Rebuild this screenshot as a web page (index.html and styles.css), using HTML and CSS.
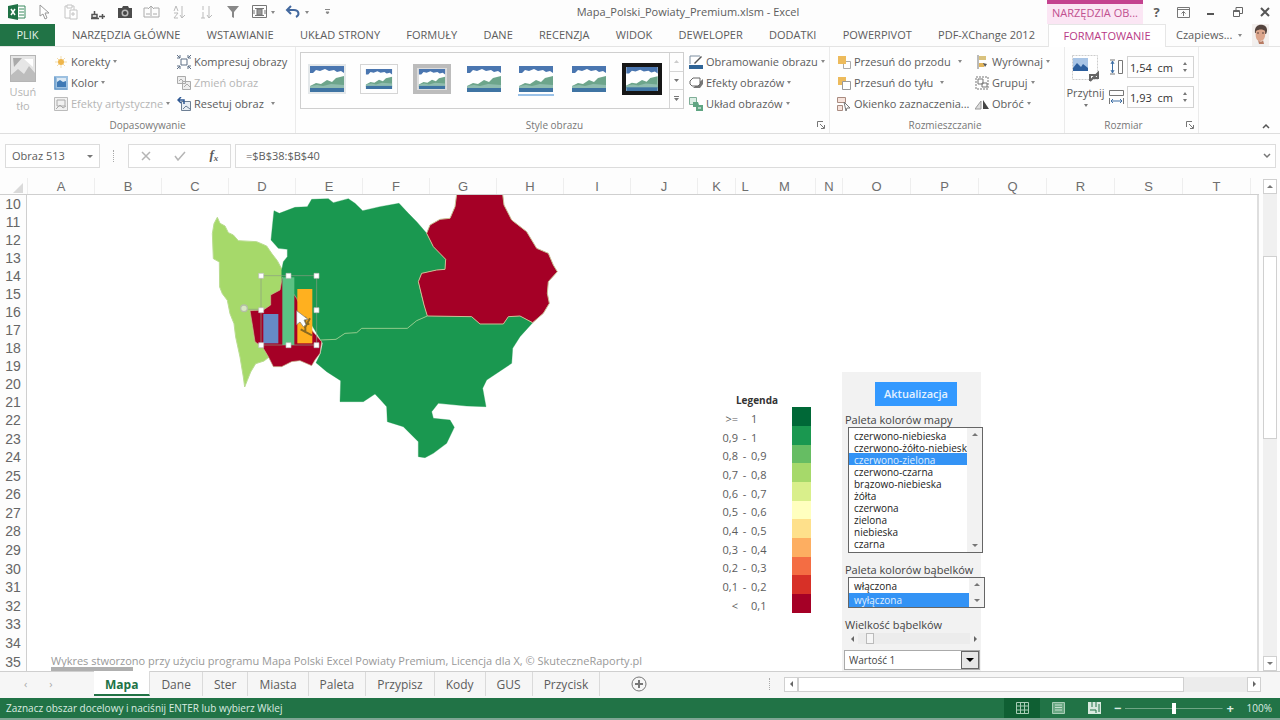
FILE: index.html
```html
<!DOCTYPE html>
<html lang="pl">
<head>
<meta charset="utf-8">
<title>Mapa_Polski_Powiaty_Premium.xlsm - Excel</title>
<link rel="stylesheet" href="styles.css">
</head>
<body>
<svg class="defs" aria-hidden="true">
  <defs>
    <symbol id="pic" viewBox="0 0 34 26">
      <rect width="34" height="26" fill="#fff"/>
      <path d="M0 0h34v7l-3-2-4 1-3-2-5 1-4-2-5 2-4-1-3 3H0z" fill="#4a76b0"/>
      <path d="M0 20l6-3 5 1 6-4 5 2 4-4 8-2v13H0z" fill="#6da58b"/>
      <path d="M0 20l7-1 6 1 8-2 13 1v4H0z" fill="#8fbcae"/>
      <rect y="22" width="34" height="4" fill="#3f74a3"/>
    </symbol>
    <symbol id="launch" viewBox="0 0 8 8"><path d="M.5 6V.5H6M3 3l4 4M7.500 4v3.500H4" fill="none" stroke="#777"/></symbol>
  </defs>
</svg>
<div class="app">
  <header class="titlebar">
    <div class="qat">
      <button aria-label="Excel"><svg width="18" height="16" viewBox="0 0 18 16"><path d="M9 2h8v12H9" fill="#fff" stroke="#3b8a5f"/><path d="M11 5h5M11 8h5M11 11h5" stroke="#3b8a5f"/><path d="M0 2l10-2v16L0 14z" fill="#1f7145"/><path d="M3 5l4 6M7 5l-4 6" stroke="#fff" stroke-width="1.500"/></svg></button>
      <button aria-label="Wskaźnik"><svg width="12" height="16" viewBox="0 0 12 16"><path d="M2 1v11l3-2 2 5 2-1-2-5h4z" fill="#fff" stroke="#999"/></svg></button>
      <button aria-label="Wklej"><svg width="16" height="16" viewBox="0 0 16 16" fill="#fff" stroke="#c4c4c4"><path d="M2 2h9v12H2z"/><path d="M4 1h5v3H4zM7 6h7v9H7z"/><path d="M10 8v4M8 10h4"/></svg></button>
      <button aria-label="Kształty"><svg width="16" height="16" viewBox="0 0 16 16" fill="none" stroke="#555"><path d="M1 14.500h8M2 10.500h5v3H2zM4.500 7v3M9 12.500h6M12.500 10v5" stroke-width="1.500"/></svg></button>
      <button aria-label="Aparat"><svg width="16" height="14" viewBox="0 0 16 14"><path d="M1 3h4l1-2h5l1 2h3v10H1z" fill="#4c4c4c"/><circle cx="8" cy="8" r="3.500" fill="#bbb"/><circle cx="8" cy="8" r="2" fill="#444"/></svg></button>
      <button aria-label="Wyślij"><svg width="17" height="16" viewBox="0 0 17 16" fill="none" stroke="#aaa"><path d="M1 4h4M11 4h5v9H1V4M8 12V2M5 5l3-3 3 3M3 10h4M10 10h4"/></svg></button>
      <button aria-label="Sortuj rosnąco"><svg width="14" height="16" viewBox="0 0 14 16" fill="none" stroke="#bbb"><path d="M2 7l2-5 2 5M2 9h4l-4 5h4M10 2v12M8 11l2 3 3-3"/></svg></button>
      <button aria-label="Sortuj malejąco"><svg width="14" height="16" viewBox="0 0 14 16" fill="none" stroke="#bbb"><path d="M4 2v4M4 8v6M2 14h4M10 2v12M8 11l2 3 3-3"/></svg></button>
      <button aria-label="Filtr"><svg width="14" height="14" viewBox="0 0 14 14"><path d="M1 1h12L8 7v6l-2-1V7z" fill="#888"/></svg></button>
      <button aria-label="Makro" class="drop"><svg width="15" height="15" viewBox="0 0 15 15" fill="none" stroke="#777"><path d="M.5.5h14v12H.5z"/><path d="M3 3.500h9M3 10.500h9"/><path d="M5 4h5v6H5z" fill="#999"/><path d="M2 5v4M13 5v4"/></svg></button>
      <button aria-label="Cofnij" class="drop"><svg width="16" height="14" viewBox="0 0 16 14" fill="none" stroke="#44699f" stroke-width="2"><path d="M6 1L2 5l4 4M2 5h7c5 0 6 5 2 7"/></svg></button>
      <button aria-label="Dostosuj"><svg width="8" height="8" viewBox="0 0 8 8"><path d="M1 1.500h5M2 4h3l-1.500 2z" stroke="#888" fill="#888"/></svg></button>
    </div>
    <h1 class="title">Mapa_Polski_Powiaty_Premium.xlsm - Excel</h1>
    <div class="context">NARZĘDZIA OB...</div>
    <div class="winctl">
      <button class="help" aria-label="Pomoc">?</button>
      <button aria-label="Opcje wstążki"><svg width="13" height="11" viewBox="0 0 13 11" fill="none" stroke="#777"><path d="M.5.5h12v10H.5zM.5 2.500h12M6.500 9V4.500M4.500 6.500l2-2 2 2"/></svg></button>
      <button aria-label="Minimalizuj"><svg width="9" height="9" viewBox="0 0 9 9"><path d="M1 6h7" stroke="#555" stroke-width="2"/></svg></button>
      <button aria-label="Przywróć"><svg width="10" height="10" viewBox="0 0 10 10" fill="none" stroke="#666"><path d="M.5 3.500h6v6h-6zM3 3V.5h6.500v6H7M.5 4.500h6"/></svg></button>
      <button aria-label="Zamknij"><svg width="10" height="10" viewBox="0 0 10 10"><path d="M1 1l8 8M9 1L1 9" stroke="#555" stroke-width="2"/></svg></button>
    </div>
  </header>

  <nav class="tabs">
    <button class="file">PLIK</button>
    <div class="tablist">
      <button>NARZĘDZIA GŁÓWNE</button><button>WSTAWIANIE</button><button>UKŁAD STRONY</button><button>FORMUŁY</button><button>DANE</button><button>RECENZJA</button><button>WIDOK</button><button>DEWELOPER</button><button>DODATKI</button><button>POWERPIVOT</button><button>PDF-XChange 2012</button>
    </div>
    <button class="active">FORMATOWANIE</button>
    <button class="user drop">Czapiews...</button>
    <svg class="avatar" width="17" height="22" viewBox="0 0 17 22"><rect width="17" height="22" fill="#f3efed"/><path d="M3 9C2 2 7 0 11 1c4 1 5 5 3 9z" fill="#54443e"/><path d="M4 7c3-2 7-2 9 0 1 6-1 10-5 10S3 12 4 7z" fill="#dca58b"/><path d="M2 22c1-5 4-5 6-4 4-1 6 1 7 4z" fill="#efefef"/><path d="M5 9h2M10 9h2" stroke="#5a4038"/><path d="M6 16c2 2 4 2 5 0l1 4H7z" fill="#b87b63"/></svg>
  </nav>

  <section class="ribbon">
    <div class="group g-adjust">
      <div class="body">
        <button class="big off"><svg width="26" height="27" viewBox="0 0 26 27"><rect x=".5" y=".5" width="25" height="26" fill="#e6e6e6" stroke="#b5b5b5"/><path d="M3 3h9L4 12z" fill="#aaa"/><path d="M1 20l7-6 6 5 5-8 6 7v8H1z" fill="#bdbdbd"/><path d="M14 4h9v8" fill="#fff"/></svg><span>Usuń<br>tło</span></button>
        <div class="col first">
          <button class="drop"><svg class="ic" viewBox="0 0 14 14"><path d="M7 1v12M1 7h12M3 3l8 8M11 3l-8 8" stroke="#f1dcae"/><circle cx="7" cy="7" r="3" fill="#efb64b"/></svg>Korekty</button>
          <button class="drop"><svg class="ic" viewBox="0 0 14 14"><rect width="14" height="14" fill="#9cc0e0"/><rect x="3" y="2" width="9" height="9" fill="#3f79b5"/><path d="M3 6l3-2 3 2 3-1V2H3z" fill="#dce9f4"/><path d="M1 1v12h12" fill="none" stroke="#5a8fc2"/></svg>Kolor</button>
          <button class="drop off"><svg class="ic" viewBox="0 0 14 14"><path d="M.5.5h13v13H.5z" fill="#f1f1f1" stroke="#bbb"/><path d="M3 3h8v6H3zM2 12l4-4 3 3 3-2" fill="none" stroke="#aaa"/></svg>Efekty artystyczne</button>
        </div>
        <div class="col second">
          <button><svg class="ic" viewBox="0 0 14 14" fill="none" stroke="#5d6e85"><path d="M4 4h6v6H4zM0 0l3 3M14 0l-3 3M0 14l3-3M14 14l-3-3M0 3h3V0M14 3h-3V0M0 11h3v3M14 11h-3v3"/></svg>Kompresuj obrazy</button>
          <button class="off"><svg class="ic" viewBox="0 0 14 14" fill="#eee" stroke="#aaa"><path d="M.5.5h8v7h-8zM5.500 5.500h8v8h-8z"/><path d="M7 11l3-3 3 3M2 5l2-2 2 2" fill="none"/></svg>Zmień obraz</button>
          <button class="drop far"><svg class="ic" viewBox="0 0 14 14"><path d="M4.500 4.500h9v9h-9z" fill="#e8eef4" stroke="#6d7f94"/><path d="M6 12l3-3 4 3" stroke="#6d7f94" fill="none"/><path d="M4 0L1 3l3 3M1 3h6v4" fill="none" stroke="#305a94" stroke-width="1.500"/></svg>Resetuj obraz</button>
        </div>
      </div>
      <div class="foot"><span>Dopasowywanie</span></div>
    </div>

    <div class="group g-styles">
      <div class="body">
        <div class="gallery">
          <div class="thumbs">
            <button class="t1" aria-label="Prosta ramka"><svg><use href="#pic"/></svg></button>
            <button class="t2" aria-label="Biała ramka"><svg><use href="#pic"/></svg></button>
            <button class="t3" aria-label="Metalowa ramka"><svg><use href="#pic"/></svg></button>
            <button class="t4" aria-label="Cień"><svg><use href="#pic"/></svg></button>
            <button class="t5" aria-label="Odbicie"><svg><use href="#pic"/></svg></button>
            <button class="t6" aria-label="Miękkie krawędzie"><svg><use href="#pic"/></svg></button>
            <button class="t7" aria-label="Czarna ramka"><svg><use href="#pic"/></svg></button>
          </div>
          <div class="steps">
            <button aria-label="W górę"><svg width="5" height="4" viewBox="0 0 5 4"><path d="M0 3l2.500-3L5 3z" fill="#ccc"/></svg></button>
            <button aria-label="W dół"><svg width="5" height="4" viewBox="0 0 5 4"><path d="M0 0h5L2.500 3z" fill="#777"/></svg></button>
            <button aria-label="Więcej"><svg width="5" height="6" viewBox="0 0 5 6"><path d="M0 0h5v1H0zM0 2h5L2.500 5z" fill="#777"/></svg></button>
          </div>
        </div>
        <div class="col third">
          <button class="drop"><svg class="ic" viewBox="0 0 14 14"><path d="M1 9V1h10" fill="none" stroke="#7d8ea0"/><path d="M5 8l7-7 1 1-7 7z" fill="#555"/><rect y="10" width="14" height="4" fill="#2f6496"/></svg>Obramowanie obrazu</button>
          <button class="drop"><svg class="ic" viewBox="0 0 14 14"><path d="M4 12h7l3-4V3z" fill="#777"/><path d="M4 2h7v6l-2 2H3L1 8V5z" fill="#fff" stroke="#666"/></svg>Efekty obrazów</button>
          <button class="drop"><svg class="ic" viewBox="0 0 14 14"><path d="M.5.5h7v7h-7z" fill="#dbeee4" stroke="#7fae97"/><path d="M4 5h5l1 3h4v6H7v-4H4z" fill="#5fa582"/><path d="M9 11h3" stroke="#fff"/></svg>Układ obrazów</button>
        </div>
      </div>
      <div class="foot"><span>Style obrazu</span><button aria-label="Formatuj kształt"><svg width="8" height="8"><use href="#launch"/></svg></button></div>
    </div>

    <div class="group g-arrange">
      <div class="body">
        <div class="col fourth">
          <button class="drop far"><svg class="ic" viewBox="0 0 14 14"><path d="M6.500 6.500h7v7h-7z" fill="#fff" stroke="#aaa"/><rect x="1" y="1" width="8" height="8" fill="#edbb5c"/></svg>Przesuń do przodu</button>
          <button class="drop far"><svg class="ic" viewBox="0 0 14 14"><rect x="1" y="1" width="8" height="8" fill="#edbb5c"/><path d="M5.500 5.500h8v8h-8z" fill="#fff" stroke="#999"/></svg>Przesuń do tyłu</button>
          <button><svg class="ic" viewBox="0 0 14 14"><path d="M.5.5h8v5h-8zM.5 8.500h5v5h-5z" fill="#f6e3dc" stroke="#a98b80"/><path d="M7 5l6 6h-3l-1 3z" fill="#fff" stroke="#777"/></svg>Okienko zaznaczenia...</button>
        </div>
        <div class="col fifth">
          <button class="drop"><svg class="ic" viewBox="0 0 14 14"><path d="M3 0v14" stroke="#777"/><rect x="4" y="1" width="7" height="4" fill="#d9c27e"/><rect x="4" y="8" width="5" height="4" fill="#e2b65c"/><path d="M8 8l4 1-2 3z" fill="#555"/></svg>Wyrównaj</button>
          <button class="drop"><svg class="ic" viewBox="0 0 14 14" fill="none" stroke="#777"><path d="M1 1h12v12H1z" stroke-dasharray="2 1"/><path d="M3 3h5v5H3zM7 7h5v4H7z"/></svg>Grupuj</button>
          <button class="drop"><svg class="ic" viewBox="0 0 14 14"><path d="M0 12h6V4z" fill="#ddd" stroke="#999"/><path d="M8 3v9h6z" fill="#444"/></svg>Obróć</button>
        </div>
      </div>
      <div class="foot"><span>Rozmieszczanie</span></div>
    </div>

    <div class="group g-size">
      <div class="body">
        <button class="big crop"><svg width="27" height="27" viewBox="0 0 27 27"><path d="M.5.5h25v24H.5z" fill="#fff" stroke="#ccc" stroke-dasharray="2 1"/><rect x="1" y="3" width="15" height="13" fill="#a9c5e6"/><path d="M1 13l4-5 4 4 2-3 5 4v3H1z" fill="#2d5f9e"/><path d="M18 26v-6h7M20 23h6v-5l-8 8" fill="none" stroke="#666" stroke-width="2"/></svg><span>Przytnij</span><i></i></button>
        <div class="dims">
          <label><svg width="15" height="16" viewBox="0 0 15 16" fill="none" stroke="#777"><path d="M1 1h5M1 15h5"/><path d="M3.500 2v12M2 5l1.500-3L5 5M2 11l1.500 3L5 11" stroke="#3d6ea5"/><path d="M9.500 1.500h4v13h-4z"/></svg><input aria-label="Wysokość" value="1,54  cm"><span class="spin"></span></label>
          <label><svg width="15" height="16" viewBox="0 0 15 16" fill="none" stroke="#777"><path d="M.5 1.500h14v5H.5zM.5 9v6M14.500 9v6"/><path d="M2 12h11M4 10l-2 2 2 2M11 10l2 2-2 2" stroke="#3d6ea5"/></svg><input aria-label="Szerokość" value="1,93  cm"><span class="spin"></span></label>
        </div>
      </div>
      <div class="foot"><span>Rozmiar</span><button aria-label="Rozmiar i właściwości"><svg width="8" height="8"><use href="#launch"/></svg></button></div>
    </div>
    <button class="collapse" aria-label="Zwiń wstążkę"><svg width="8" height="6" viewBox="0 0 8 6"><path d="M1 5l3-3 3 3" fill="none" stroke="#555" stroke-width="1.500"/></svg></button>
  </section>

  <section class="formula">
    <div class="namebox"><input aria-label="Pole nazwy" value="Obraz 513"><i></i></div>
    <span class="grip"></span>
    <div class="fx">
      <button aria-label="Anuluj"><svg width="10" height="10" viewBox="0 0 10 10"><path d="M1 1l8 8M9 1L1 9" stroke="#b5b5b5" stroke-width="1.500"/></svg></button>
      <button aria-label="Wpis"><svg width="12" height="10" viewBox="0 0 12 10"><path d="M1 5l3 4 7-8" fill="none" stroke="#b5b5b5" stroke-width="1.500"/></svg></button>
      <button class="fn" aria-label="Wstaw funkcję">f<sub>x</sub></button>
    </div>
    <div class="entry"><input aria-label="Pasek formuły" value="=$B$38:$B$40"><svg width="8" height="6" viewBox="0 0 8 6"><path d="M1 1l3 3 3-3" fill="none" stroke="#777" stroke-width="1.500"/></svg></div>
  </section>

  <main class="work">
    <div class="grid">
      <div class="heads">
        <span class="corner"><svg width="10" height="10" viewBox="0 0 10 10"><path d="M10 0v10H0z" fill="#dadada"/></svg></span>
        <span>A</span><span>B</span><span>C</span><span>D</span><span>E</span><span>F</span><span>G</span><span>H</span><span>I</span><span>J</span><span class="k">K</span><span class="l">L</span><span class="m">M</span><span class="n">N</span><span class="w">O</span><span class="w">P</span><span class="w">Q</span><span class="w">R</span><span class="w">S</span><span class="w">T</span>
      </div>
      <div class="rows">
        <span>10</span><span>11</span><span>12</span><span>13</span><span>14</span><span>15</span><span>16</span><span>17</span><span>18</span><span>19</span><span>20</span><span>21</span><span class="tall">22</span><span class="tall">23</span><span class="tall">24</span><span class="tall">25</span><span class="tall">26</span><span class="tall">27</span><span class="tall">28</span><span class="tall">29</span><span class="tall">30</span><span class="tall">31</span><span class="tall">32</span><span class="tall">33</span><span class="tall">34</span><span class="tall">35</span>
      </div>
      <div class="canvas">
        <svg class="map" viewBox="30 15 1050 801" role="img" aria-label="Mapa powiatów">
          <g stroke="#c9bf94" stroke-width="3" stroke-linejoin="round">
            <path fill="#a6d96a" stroke="#b9dc90" d="M52 82l8 18 15 8 10 20 15 7 15 17 55 3 30 13 15 22 17 22 15 28v62l-25 10-8 34-22 15-40 2 8 48 7 45 25 20 15 25-15 12-25 8-15 25-10 25-8 20-4-30-10-60-13-60-5-40-12-30-8-40-15-20-8-20-1-75-18-10-3-75 5-30z"/>
            <path fill="#1a9850" stroke="#1a9850" stroke-width="1" d="M222 62l16 8 47-18 37-2 13-22 50-2 15 12 45-12 20 14 23 22 52-12 57-10 28 30 25 25 30 35 20 40 20 20 17 18-2 30-25 2-45 10-10 25 10 45 7 25 10 33-32 14-28 23H485l-15 13-35 2-27 18-46 2-30-50-72-90-15-30V240l5-25 12-15v-22l-27-3-22-25 5-50z"/>
            <path fill="#1a9850" stroke="#1a9850" stroke-width="1" d="M362 450l46-2 27-18 35-2 15-13h137l28-23 32-14 133 2 25 22h70l15-22 35-2 38 20-38 42-22 35-3 45-75 50-12 25 10 55-58-2-85-8-20 25 5 20 50 5 13 22-23 48-40 30-25 13-20-3v-45l-45-45-48-15-2-45-18-20-17-18-35 23h-70l2-63-42-27-32-27 14-28 6-30z"/>
            <path fill="#a50026" d="M770 12h138l4 33 23 45 45 35 30 50 35 15 15 35 12 20-27 30-3 35 6 30-18 30-32 28-38-20-35 2-15 22h-70l-25-22-133-2-10-33-17-70 10-25 45-10 25-2 2-30-37-38-20-40 10-25 30-17 30-3 15-35z"/>
            <path fill="#a50026" stroke-width="2" d="M150 362l40-2 22-15v-30l28-15 7-38 43 63 45 95 30 35-5 35-15 20-10 17-35-15-25 3-30 15h-25l-15-30-15-25-25-20-7-45z"/>
            <path fill="none" d="M362 450l46-2 27-18 35-2 15-13h137l28-23 32-14" stroke="#8fca8a"/>
          </g>
          <rect x="190" y="372" width="45" height="88" fill="#668ac6"/>
          <rect x="247" y="262" width="36" height="203" fill="#5bc283"/>
          <rect x="292" y="297" width="45" height="163" fill="#ffb01f"/>
          <path d="M183 257h167v208H183zM145 358h38" fill="none" stroke="#8d9d84" stroke-width="2"/>
          <circle cx="132" cy="355" r="10" fill="#d8e8c4" stroke="#b4bfa6" stroke-width="4"/>
          <g fill="#fff" stroke="#bbb" stroke-width="2"><path d="M176 250h15v15h-15zM258 250h15v15h-15zM342 250h15v15h-15zM176 353h15v15h-15zM342 353h15v15h-15zM176 458h15v15h-15zM258 458h15v15h-15zM342 458h15v15h-15z"/></g>
          <path d="M306 402h22M316 380v48M302 418l34 18M330 385l-16 30" stroke="#8a6a20" stroke-width="6"/>
          <path d="M290 362v42l10-8 10 14 8-6-6-14 12-2z" fill="#fff" stroke="#777" stroke-width="2"/>
        </svg>
        <table class="legend">
          <caption>Legenda</caption>
          <tr><td>&gt;=</td><td></td><td>1</td><td class="c1"></td></tr>
          <tr><td>0,9</td><td>-</td><td>1</td><td class="c2"></td></tr>
          <tr><td>0,8</td><td>-</td><td>0,9</td><td class="c3"></td></tr>
          <tr><td>0,7</td><td>-</td><td>0,8</td><td class="c4"></td></tr>
          <tr><td>0,6</td><td>-</td><td>0,7</td><td class="c5"></td></tr>
          <tr><td>0,5</td><td>-</td><td>0,6</td><td class="c6"></td></tr>
          <tr><td>0,4</td><td>-</td><td>0,5</td><td class="c7"></td></tr>
          <tr><td>0,3</td><td>-</td><td>0,4</td><td class="c8"></td></tr>
          <tr><td>0,2</td><td>-</td><td>0,3</td><td class="c9"></td></tr>
          <tr><td>0,1</td><td>-</td><td>0,2</td><td class="c10"></td></tr>
          <tr><td>&lt;</td><td></td><td>0,1</td><td class="c11"></td></tr>
        </table>
        <form class="panel">
          <button type="button" class="update">Aktualizacja</button>
          <label for="map-palette">Paleta kolorów mapy</label>
          <div class="listbox">
            <select id="map-palette" size="10"><option>czerwono-niebieska</option><option>czerwono-żółto-niebieska</option><option selected>czerwono-zielona</option><option>czerwono-czarna</option><option>brązowo-niebieska</option><option>żółta</option><option>czerwona</option><option>zielona</option><option>niebieska</option><option>czarna</option></select>
            <span class="bar"><i class="up"></i><i class="down"></i></span>
          </div>
          <label for="bubble-palette" class="next">Paleta kolorów bąbelków</label>
          <div class="listbox short">
            <select id="bubble-palette" size="2"><option>włączona</option><option selected>wyłączona</option></select>
            <span class="bar"><i class="up"></i><i class="down"></i></span>
          </div>
          <label for="bubble-size" class="next">Wielkość bąbelków</label>
          <div class="slide"><i class="left"></i><input id="bubble-size" type="range" min="0" max="100" value="8"><i class="right"></i></div>
          <div class="combo"><select aria-label="Wartość"><option>Wartość 1</option></select><span><i class="down"></i></span></div>
        </form>
        <p class="note">Wykres stworzono przy użyciu programu Mapa Polski Excel Powiaty Premium, Licencja dla X, © SkuteczneRaporty.pl</p>
      </div>
    </div>
    <div class="vscroll">
      <button aria-label="Przewiń w górę"><i class="up"></i></button>
      <div class="track"><span class="thumb"></span></div>
      <button aria-label="Przewiń w dół"><i class="down"></i></button>
    </div>
  </main>

  <nav class="sheets">
    <div class="nav"><button aria-label="Poprzedni arkusz">‹</button><button aria-label="Następny arkusz">›</button></div>
    <button class="on">Mapa</button><button>Dane</button><button>Ster</button><button>Miasta</button><button>Paleta</button><button>Przypisz</button><button>Kody</button><button>GUS</button><button>Przycisk</button>
    <button class="add" aria-label="Nowy arkusz"><svg width="16" height="16" viewBox="0 0 16 16" fill="none" stroke="#777"><circle cx="8" cy="8" r="7"/><path d="M8 4v8M4 8h8" stroke-width="2"/></svg></button>
    <div class="hscroll">
      <span class="grip"></span>
      <button aria-label="Przewiń w lewo"><i class="left"></i></button>
      <div class="track"><span class="thumb"></span></div>
      <button aria-label="Przewiń w prawo"><i class="right"></i></button>
    </div>
  </nav>

  <footer class="status">
    <span class="msg">Zaznacz obszar docelowy i naciśnij ENTER lub wybierz Wklej</span>
    <div class="views">
      <button class="sel" aria-label="Normalny"><svg width="13" height="12" viewBox="0 0 13 12" fill="none" stroke="#a8cdb6"><path d="M.5.5h12v11H.5zM.5 4h12M.5 8h12M4.500 0v12M8.500 0v12"/></svg></button>
      <button aria-label="Układ strony"><svg width="13" height="12" viewBox="0 0 13 12"><path d="M.5.5h12v11H.5z" fill="#6aa783" stroke="#a8cdb6"/><path d="M3 3h7M3 5.500h7M3 8h7" stroke="#c5dfcf"/></svg></button>
      <button aria-label="Podział stron"><svg width="13" height="12" viewBox="0 0 13 12"><path d="M0 0h13v12H0z" fill="#d9eadf"/><path d="M4 0v5M8 0v5M2 8h6v3M11 2v8" stroke="#217346" fill="none"/></svg></button>
    </div>
    <div class="zoom"><button aria-label="Pomniejsz">−</button><input type="range" min="0" max="100" value="50" aria-label="Powiększenie"><button aria-label="Powiększ">+</button></div>
    <span class="pct">100%</span>
  </footer>
</div>
</body>
</html>
```

FILE: styles.css
```css
* { box-sizing: border-box; }
body { margin: 0; font: 11px/14px "Open Sans", "Noto Sans", sans-serif; color: #5c5c5c; background: #fdfdfd; }
button, input, select { font: inherit; color: inherit; background: none; border: 0; padding: 0; margin: 0; outline: 0; border-radius: 0; min-width: 0; }
button { white-space: nowrap; }
svg { display: block; flex: none; }
.defs { position: absolute; width: 0; height: 0; }
.app { display: flex; flex-direction: column; height: 100vh; min-height: 720px; overflow: hidden; }

.drop::after { content: ""; border: 2px solid transparent; border-top: 3px solid #888; border-bottom: 0; margin-left: 4px; flex: none; }
.up, .down, .left, .right { display: block; width: 0; height: 0; border: 3px solid transparent; }
.up { border-bottom-color: #777; border-top: 0; }
.down { border-top-color: #777; border-bottom: 0; }
.left { border-right-color: #666; border-left: 0; }
.right { border-left-color: #666; border-right: 0; }

.titlebar { display: flex; align-items: center; height: 24px; flex: none; }
.qat { display: flex; align-items: center; height: 22px; padding-left: 3px; }
.qat button { display: flex; align-items: center; justify-content: center; width: 27px; }
.qat .drop { width: 34px; }
.title { flex: 1; margin: 0; padding-right: 12px; font-size: 11px; font-weight: 400; text-align: center; }
.context { align-self: stretch; width: 96px; padding-top: 2px; border-top: 4px solid #c4428f; background: #fbe6f4; color: #c0508f; text-align: center; line-height: 13px; }
.winctl { display: flex; align-items: center; height: 22px; padding-right: 2px; }
.winctl button { display: flex; align-items: center; justify-content: center; width: 27px; }
.winctl .help { font-size: 13px; font-weight: 700; }

.tabs { display: flex; align-items: stretch; height: 23px; flex: none; border-bottom: 1px solid #e4e4e4; }
.tabs .file { width: 55px; background: #217346; color: #e3f1e8; }
.tablist { display: flex; flex: 1; justify-content: space-between; padding-left: 4px; }
.tablist button { padding: 0 13px; }
.tabs .active { width: 118px; margin-bottom: -1px; color: #b83a86; background: #fff; border: 1px solid #e6e6e6; border-bottom: 0; }
.tabs .user { display: flex; align-items: center; width: 86px; padding-left: 10px; }
.tabs .user::after { margin-left: 6px; }
.avatar { margin-right: 11px; }

.ribbon { display: flex; height: 87px; flex: none; background: #fefefe; border-bottom: 1px solid #dedede; }
.group { display: flex; flex-direction: column; border-right: 1px solid #ebebeb; }
.body { display: flex; flex: 1; padding-top: 4px; }
.foot { display: flex; align-items: center; height: 16px; }
.foot span { flex: 1; text-align: center; font-size: 10px; color: #777; }
.foot button { width: 16px; padding-left: 4px; }
.g-adjust { width: 296px; }
.g-styles { width: 534px; }
.g-arrange { width: 235px; }
.g-arrange .foot { padding-right: 4px; }
.g-size { width: 134px; }
.col { display: flex; flex-direction: column; }
.col button { display: flex; align-items: center; height: 21px; gap: 3px; text-align: left; }
.col .drop::after { margin-left: 0; }
.col .far::after { margin-left: 4px; }
.ic { width: 14px; height: 14px; }
.off { color: #b5b5b5; }
.big { display: flex; flex-direction: column; align-items: center; gap: 3px; padding-top: 4px; width: 46px; }
.big i { border: 2px solid transparent; border-top: 3px solid #777; border-bottom: 0; }
.first { width: 123px; padding-left: 8px; }
.second { padding-left: 8px; }
.third { padding-left: 5px; }
.fourth { width: 137px; padding-left: 7px; }
.fifth { padding-left: 8px; }
.gallery { display: flex; width: 384px; height: 57px; margin: 1px 0 0 4px; border: 1px solid #cfcfcf; }
.thumbs { display: flex; flex: 1; align-items: center; justify-content: space-around; padding-bottom: 3px; }
.thumbs svg { width: 34px; height: 26px; }
.thumbs button { border: 2px solid transparent; }
.thumbs .t1 { border-color: #e4e8ea; }
.thumbs .t2 { border: 1px solid #d5d5d5; padding: 4px; }
.thumbs .t2 svg, .thumbs .t3 svg { width: 28px; height: 20px; }
.thumbs .t3 { border: 4px solid #bcbcbc; padding: 1px; background: #ddd; }
.thumbs .t5 { box-shadow: 0 3px 0 -1px #9bc2e8; }
.thumbs .t7 { border: 4px solid #161616; }
.thumbs .t7 svg { width: 32px; height: 24px; }
.steps { display: flex; flex-direction: column; width: 14px; border-left: 1px solid #d5d5d5; }
.steps button { flex: 1; display: flex; align-items: center; justify-content: center; }
.steps button + button { border-top: 1px solid #d5d5d5; }
.crop { width: 41px; gap: 4px; }
.dims { display: flex; flex-direction: column; gap: 8px; padding: 5px 0 0 3px; }
.dims label { display: flex; align-items: center; gap: 3px; }
.dims input { width: 50px; height: 22px; padding-left: 2px; border: 1px solid #d3d3d3; border-right: 0; color: #333; white-space: pre; }
.spin { width: 17px; height: 22px; margin-left: -3px; border: 1px solid #d3d3d3; border-left: 0; display: flex; flex-direction: column; align-items: center; justify-content: space-around; padding: 3px 0; }
.spin::before, .spin::after { content: ""; border: 2px solid transparent; }
.spin::before { border-bottom: 3px solid #777; border-top: 0; }
.spin::after { border-top: 3px solid #777; border-bottom: 0; }
.collapse { margin: auto 10px 4px auto; }

.formula { display: flex; align-items: center; height: 44px; padding: 0 4px 0 5px; flex: none; }
.namebox { display: flex; align-items: center; width: 95px; height: 24px; border: 1px solid #dcdcdc; background: #fff; }
.namebox input { flex: 1; padding-left: 6px; }
.namebox i { border: 3px solid transparent; border-top-color: #777; border-bottom: 0; margin-right: 6px; }
.grip { width: 1px; height: 12px; border-left: 1px dotted #aaa; }
.formula .grip { margin: 0 14px 0 13px; }
.fx { display: flex; align-items: center; justify-content: space-around; width: 103px; height: 24px; border: 1px solid #dcdcdc; background: #fff; }
.fx .fn { font: italic 700 13px/14px "Liberation Serif", serif; }
.fn sub { font-size: 9px; vertical-align: -2px; }
.entry { display: flex; align-items: center; flex: 1; height: 24px; margin-left: 4px; padding-right: 4px; border: 1px solid #dcdcdc; background: #fff; }
.entry input { flex: 1; padding-left: 10px; }

.work { display: flex; flex: 1; min-height: 0; }
.grid { display: grid; flex: 1; min-width: 0; grid-template: 17px 1fr / 27px 1fr; }
.heads { grid-column: 1 / 3; display: flex; border-bottom: 1px solid #cfcfcf; font: 13px/17px "Liberation Sans", sans-serif; color: #6e6e6e; overflow: hidden; }
.heads span { width: 67px; flex: none; text-align: center; border-right: 1px solid #eee; }
.heads .corner { width: 28px; padding: 5px 0 0 13px; }
.heads .k { width: 38px; }
.heads .l { width: 18px; border: 0; }
.heads .m { width: 62px; }
.heads .n { width: 27px; }
.heads .w { width: 68px; }
.rows { display: flex; flex-direction: column; border-right: 1px solid #cfcfcf; font: 14px/18px "Liberation Sans", sans-serif; text-align: center; color: #666; }
.rows span { height: 18px; flex: none; }
.rows .tall { height: auto; flex: 1; }
.canvas { position: relative; overflow: hidden; background: #fff; border-right: 2px solid #dedede; }
.map { position: absolute; left: 183px; top: 0; width: 350px; height: 267px; }
.legend { position: absolute; left: 692px; top: 198px; border-collapse: collapse; font-size: 11px; line-height: 14px; }
.legend caption { font-size: 10px; line-height: 14px; font-weight: 700; color: #333; padding-right: 16px; }
.legend tr { height: 19px; }
.legend tr:nth-child(3n) { height: 18px; }
.legend td { padding: 4px 0 0; }
.legend td:nth-child(1) { width: 19px; text-align: right; }
.legend td:nth-child(2) { width: 13px; text-align: center; }
.legend td:nth-child(3) { width: 41px; }
.legend td:nth-child(4) { width: 19px; }
.c1 { background: #006837; } .c2 { background: #1a9850; } .c3 { background: #66bd63; } .c4 { background: #a6d96a; }
.c5 { background: #d9ef8b; } .c6 { background: #ffffbf; } .c7 { background: #fee08b; } .c8 { background: #fdae61; }
.c9 { background: #f46d43; } .c10 { background: #d73027; } .c11 { background: #a50026; }

.panel { position: absolute; left: 815px; top: 177px; width: 139px; bottom: 0; padding: 10px 0 0 3px; background: #f2f2f2; display: flex; flex-direction: column; color: #444; white-space: nowrap; }
.update { width: 82px; height: 24px; margin: 0 0 7px 30px; background: #3399ff; color: #e3f1ff; font-size: 11px; font-weight: 600; flex: none; }
.listbox { display: flex; width: 135px; height: 126px; margin-left: 3px; border: 1px solid #666; background: #fff; flex: none; }
.listbox select { flex: 1; overflow: hidden; font-size: 10px; line-height: 12px; height: 124px; color: #222; padding-top: 1px; }
.listbox option { min-height: 12px; height: 12px; padding: 0 0 0 5px; line-height: 12px; overflow: hidden; }
.listbox option:checked { background: linear-gradient(#3393f5, #3393f5); color: #e0f0ff; }
.bar { width: 15px; display: flex; flex-direction: column; align-items: center; justify-content: space-between; padding: 5px 0; background: #f2f2f2; }
.short { width: 137px; height: 31px; }
.short select { height: 29px; }
.short option { height: 14px; line-height: 14px; }
.next { margin-top: 10px; }
.slide { display: flex; align-items: center; height: 13px; padding: 0 4px 0 6px; margin: 0 0 5px; }
.slide input { flex: 1; appearance: none; height: 11px; margin: 0 4px; background: #ececec; }
.slide input::-webkit-slider-thumb { appearance: none; width: 8px; height: 11px; background: #f6f6f6; border: 1px solid #bbb; }
.combo { display: flex; width: 136px; height: 20px; border: 1px solid #aaa; background: #fff; font-size: 10px; margin-left: -1px; }
.combo select { flex: 1; appearance: none; padding-left: 4px; }
.combo span { display: flex; align-items: center; justify-content: center; width: 18px; border: 1px solid #666; background: #e6e6e6; }
.combo i { border-width: 4px; border-bottom: 0; border-top-color: #000; }
.note { position: absolute; left: 24px; bottom: 3px; margin: 0; font-size: 11px; line-height: 14px; color: #999; white-space: nowrap; }
.note::after { content: ""; position: absolute; left: 0; bottom: -3px; width: 82px; height: 4px; background: #b0b0b0; }

.vscroll { display: flex; flex-direction: column; width: 21px; padding: 1px 3px 0 4px; }
.vscroll button, .hscroll button { display: flex; align-items: center; justify-content: center; width: 14px; height: 15px; border: 1px solid #d0d0d0; background: #fff; flex: none; }
.vscroll .track { display: flex; flex: 1; padding-top: 62px; background: #f0f0f0; }
.vscroll .thumb { width: 14px; height: 183px; background: #fff; border: 1px solid #d0d0d0; }

.sheets { display: flex; height: 27px; flex: none; padding-bottom: 2px; background: #f6f6f6; border-top: 1px solid #cfcfcf; }
.sheets > button { padding: 2px 11px 0; border-right: 1px solid #dadada; font-size: 12px; }
.sheets .nav { display: flex; width: 94px; padding-left: 24px; gap: 22px; color: #aaa; }
.sheets > .on { font-weight: 700; color: #217346; background: #fff; border-bottom: 2px solid #217346; margin-top: -1px; padding-top: 4px; }
.sheets > .add { border: 0; padding: 0 31px; }
.hscroll { display: flex; align-items: center; width: 511px; margin-left: auto; padding-right: 19px; }
.hscroll .grip { margin-right: 14px; }
.hscroll .track { flex: 1; display: flex; height: 15px; background: #ececec; }
.hscroll .thumb { width: 86%; background: #fff; border: 1px solid #d0d0d0; }

.status { display: flex; align-items: center; height: 22px; flex: none; padding: 0 8px 0 6px; background: #217346; border-bottom: 2px solid #7fa694; color: #dcece2; font-size: 10px; }
.msg { flex: 1; }
.views { display: flex; align-self: stretch; }
.views button { display: flex; align-items: center; justify-content: center; width: 36px; }
.views .sel { background: #0f5f33; }
.zoom { display: flex; align-items: center; gap: 4px; width: 120px; margin: 0 12px 0 2px; font-size: 13px; font-weight: 700; }
.zoom input { flex: 1; appearance: none; height: 12px; background: linear-gradient(#6fa585, #6fa585) center / 100% 1px no-repeat; }
.zoom input::-webkit-slider-thumb { appearance: none; width: 4px; height: 11px; background: #fff; }
.pct { width: 26px; text-align: right; }
```
